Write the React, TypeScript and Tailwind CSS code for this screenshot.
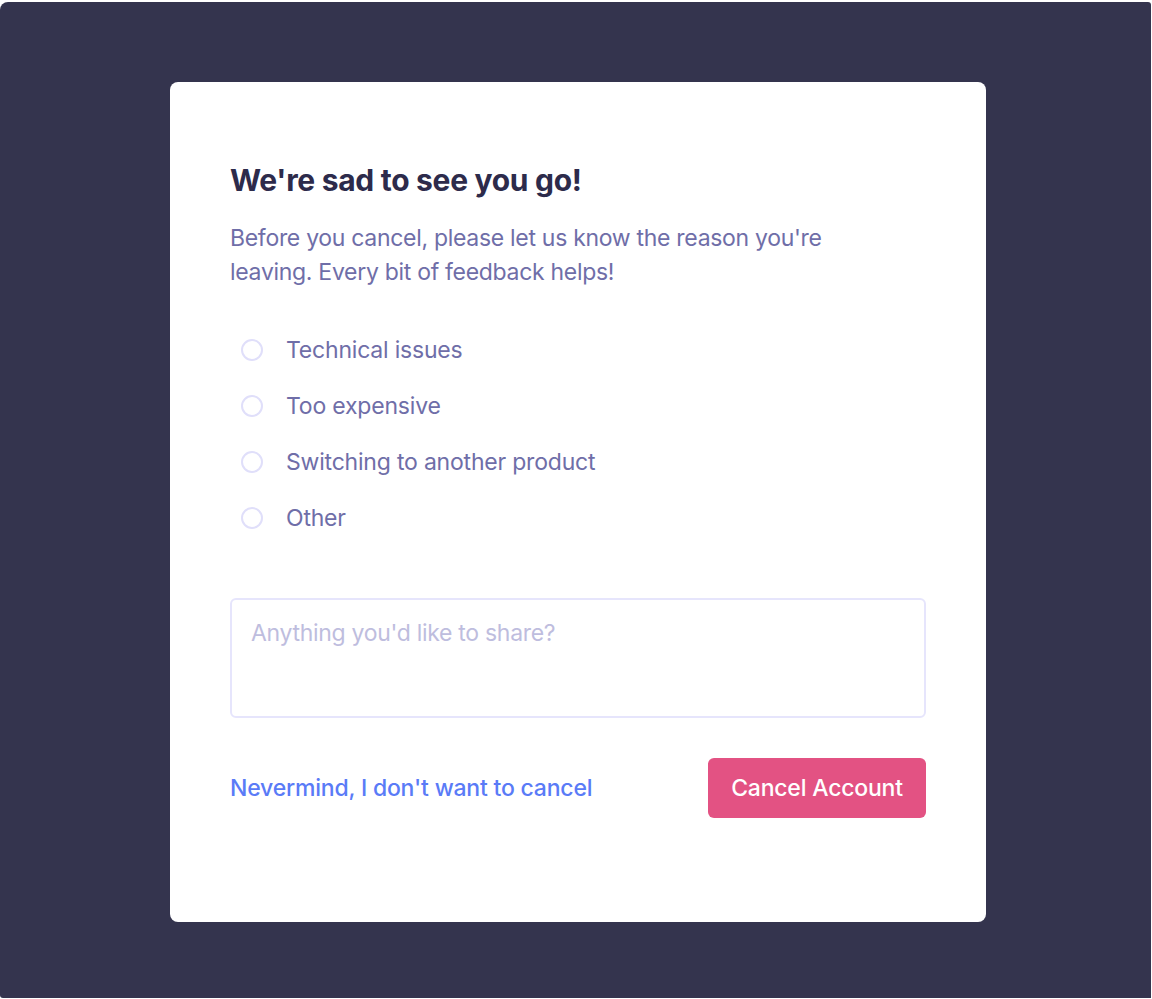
import React from "react";

const options = ["Technical issues", "Too expensive", "Switching to another product", "Other"];

export default function App() {
  return (
    <div className="w-[1152px] h-[999px] bg-white pt-[2px]" style={{ fontFamily: "Inter, 'Noto Sans', sans-serif" }}>
      <div className="w-[1151px] h-[996px] bg-[#34344e] rounded-tl-lg rounded-tr-[3px] rounded-bl-[3px] pt-[80px] pl-[170px]">
        <div className="w-[816px] h-[840px] bg-white rounded-lg px-[60px] pt-[78px]">
          <h1 className="text-[30px] leading-[40px] font-bold text-[#2d2b4b] tracking-[-0.3px]">We're sad to see you go!</h1>
          <p className="mt-[21px] text-[23px] leading-[34px] text-[#6f6ea8] tracking-[-0.3px]">
            Before you cancel, please let us know the reason you're
            <br />
            leaving. Every bit of feedback helps!
          </p>
          <div className="mt-[33px] flex flex-col">
            {options.map((o) => (
              <label key={o} className="flex items-center h-[56px] pl-[11px]">
                <span className="w-[22px] h-[22px] rounded-full border-2 border-[#e0dffa] shrink-0" />
                <span className="ml-[23px] text-[23px] text-[#6f6ea8] tracking-[-0.2px]">{o}</span>
              </label>
            ))}
          </div>
          <div className="mt-[52px] h-[120px] w-[696px] rounded-md border-2 border-[#e6e5fc] px-[19px] pt-[16px]">
            <span className="text-[23px] text-[#bebdde] tracking-[-0.3px]">Anything you'd like to share?</span>
          </div>
          <div className="mt-[40px] flex items-center justify-between w-[696px]">
            <span className="text-[23px] font-medium text-[#5a7bf7] tracking-[-0.2px]">Nevermind, I don't want to cancel</span>
            <button className="w-[218px] h-[60px] rounded-md bg-[#e35283] text-white text-[23px] font-medium tracking-[-0.2px]">
              Cancel Account
            </button>
          </div>
        </div>
      </div>
    </div>
  );
}
